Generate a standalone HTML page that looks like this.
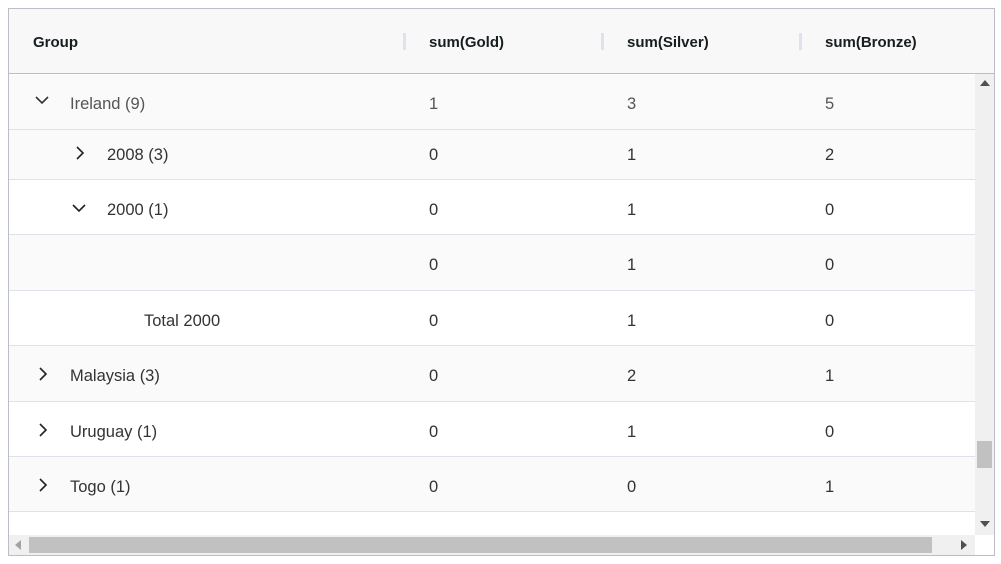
<!DOCTYPE html>
<html><head><meta charset="utf-8"><style>
*{margin:0;padding:0;box-sizing:border-box}
body{width:1001px;height:564px;background:#fff;font-family:"Liberation Sans",sans-serif;position:relative;overflow:hidden}
.grid{position:absolute;left:8px;top:8px;width:987px;height:548px;border:1px solid #babfc7;overflow:hidden}
.hdr{position:absolute;left:0;top:0;width:985px;height:65px;background:#f8f8f8;border-bottom:1px solid #babfc7}
.h{position:absolute;top:25px;font-weight:bold;font-size:15px;color:#181d1f}
.sep{position:absolute;top:24px;width:3px;height:17px;background:#dde2eb}
.row{position:absolute;left:0;width:966px;border-bottom:1px solid #dde2eb}
.c{position:absolute;font-size:16.5px;color:#333;margin-top:2px}
.g{color:#555}
svg{position:absolute}
.vs{position:absolute;left:966px;top:65px;width:19px;height:461px;background:#f0f0f0}
.hs{position:absolute;left:0;top:526px;width:966px;height:20px;background:#f0f0f0}
</style></head><body>
<div class="grid">
<div class="hdr">
<div class="h" style="left:24px">Group</div>
<div class="sep" style="left:394px"></div>
<div class="h" style="left:420px">sum(Gold)</div>
<div class="sep" style="left:592px"></div>
<div class="h" style="left:618px">sum(Silver)</div>
<div class="sep" style="left:790px"></div>
<div class="h" style="left:816px">sum(Bronze)</div>
</div>

<div class="row" style="top:66px;height:55px;background:#fafafa">
<svg style="left:26px;top:20px" width="14" height="10"><path d="M1 2 L7 8 L13 2" fill="none" stroke="#333" stroke-width="1.6"/></svg>
<div class="c g" style="left:61px;top:18px">Ireland (9)</div>
<div class="c g" style="left:420px;top:18px">1</div><div class="c g" style="left:618px;top:18px">3</div><div class="c g" style="left:816px;top:18px">5</div>
</div>
<div class="row" style="top:121px;height:50px;background:#fafafa">
<svg style="left:66px;top:16px" width="10" height="14"><path d="M2 1 L8 7 L2 13" fill="none" stroke="#222" stroke-width="1.6"/></svg>
<div class="c" style="left:98px;top:14px">2008 (3)</div>
<div class="c" style="left:420px;top:14px">0</div><div class="c" style="left:618px;top:14px">1</div><div class="c" style="left:816px;top:14px">2</div>
</div>
<div class="row" style="top:171px;height:55px;background:#fff">
<svg style="left:63px;top:23px" width="14" height="10"><path d="M1 2 L7 8 L13 2" fill="none" stroke="#222" stroke-width="1.6"/></svg>
<div class="c" style="left:98px;top:19px">2000 (1)</div>
<div class="c" style="left:420px;top:19px">0</div><div class="c" style="left:618px;top:19px">1</div><div class="c" style="left:816px;top:19px">0</div>
</div>
<div class="row" style="top:226px;height:56px;background:#fafafa">
<div class="c" style="left:420px;top:19px">0</div><div class="c" style="left:618px;top:19px">1</div><div class="c" style="left:816px;top:19px">0</div>
</div>
<div class="row" style="top:282px;height:55px;background:#fff">
<div class="c" style="left:135px;top:19px">Total 2000</div>
<div class="c" style="left:420px;top:19px">0</div><div class="c" style="left:618px;top:19px">1</div><div class="c" style="left:816px;top:19px">0</div>
</div>
<div class="row" style="top:337px;height:56px;background:#fafafa">
<svg style="left:29px;top:21px" width="10" height="14"><path d="M2 1 L8 7 L2 13" fill="none" stroke="#222" stroke-width="1.6"/></svg>
<div class="c" style="left:61px;top:19px">Malaysia (3)</div>
<div class="c" style="left:420px;top:19px">0</div><div class="c" style="left:618px;top:19px">2</div><div class="c" style="left:816px;top:19px">1</div>
</div>
<div class="row" style="top:393px;height:55px;background:#fff">
<svg style="left:29px;top:21px" width="10" height="14"><path d="M2 1 L8 7 L2 13" fill="none" stroke="#222" stroke-width="1.6"/></svg>
<div class="c" style="left:61px;top:19px">Uruguay (1)</div>
<div class="c" style="left:420px;top:19px">0</div><div class="c" style="left:618px;top:19px">1</div><div class="c" style="left:816px;top:19px">0</div>
</div>
<div class="row" style="top:448px;height:55px;background:#fafafa">
<svg style="left:29px;top:21px" width="10" height="14"><path d="M2 1 L8 7 L2 13" fill="none" stroke="#222" stroke-width="1.6"/></svg>
<div class="c" style="left:61px;top:19px">Togo (1)</div>
<div class="c" style="left:420px;top:19px">0</div><div class="c" style="left:618px;top:19px">0</div><div class="c" style="left:816px;top:19px">1</div>
</div>
<div class="row" style="top:503px;height:30px;background:#fff;border:none"></div>

<div class="vs">
<svg style="left:5px;top:6px" width="10" height="6"><path d="M0 6 L5 0 L10 6 Z" fill="#505050"/></svg>
<div style="position:absolute;left:2px;top:367px;width:15px;height:27px;background:#c1c1c1"></div>
<svg style="left:5px;top:447px" width="10" height="6"><path d="M0 0 L10 0 L5 6 Z" fill="#505050"/></svg>
</div>
<div class="hs">
<svg style="left:6px;top:5px" width="6" height="10"><path d="M6 0 L6 10 L0 5 Z" fill="#a3a3a3"/></svg>
<div style="position:absolute;left:20px;top:2px;width:903px;height:16px;background:#c1c1c1"></div>
<svg style="left:952px;top:5px" width="6" height="10"><path d="M0 0 L0 10 L6 5 Z" fill="#505050"/></svg>
</div>
<div style="position:absolute;left:966px;top:526px;width:19px;height:20px;background:#fff"></div>
</div>
</body></html>
